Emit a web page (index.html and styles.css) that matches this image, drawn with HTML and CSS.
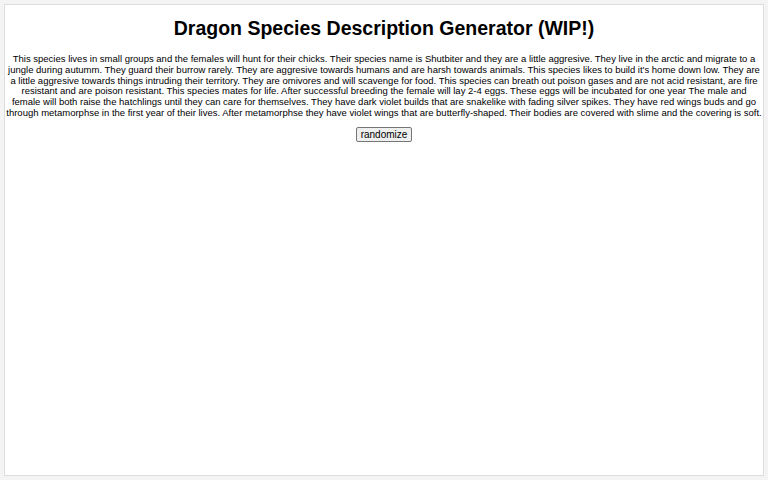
FILE: index.html
```html
<!DOCTYPE html>
<html lang="en">
<head>
    <meta charset="UTF-8">
    <meta name="viewport" content="width=device-width, initial-scale=1.0">
    <title>Dragon Species Description Generator</title>
    <link rel="stylesheet" href="styles.css">
</head>
<body>
    <div class="page">
        <h1>Dragon Species Description Generator (WIP!)</h1>
        <p id="description" class="description">This species lives in small groups and the females will hunt for their chicks. Their species name is Shutbiter and they are a little aggresive. They live in the arctic and migrate to a jungle during autumm. They guard their burrow rarely. They are aggresive towards humans and are harsh towards animals. This species likes to build it's home down low. They are a little aggresive towards things intruding their territory. They are omivores and will scavenge for food. This species can breath out poison gases and are not acid resistant, are fire resistant and are poison resistant. This species mates for life. After successful breeding the female will lay 2-4 eggs. These eggs will be incubated for one year The male and female will both raise the hatchlings until they can care for themselves. They have dark violet builds that are snakelike with fading silver spikes. They have red wings buds and go through metamorphse in the first year of their lives. After metamorphse they have violet wings that are butterfly-shaped. Their bodies are covered with slime and the covering is soft.</p>
        <div class="controls">
            <button type="button" id="randomize">randomize</button>
        </div>
    </div>
</body>
</html>
```

FILE: styles.css
```css
html,
body {
    height: 100%;
}

body {
    font-family: "Liberation Sans", Arial, sans-serif;
    background-color: #f4f4f4;
    margin: 0;
    padding: 4px;
    box-sizing: border-box;
}

.page {
    background-color: #fff;
    border: 1px solid #ddd;
    height: 100%;
    box-sizing: border-box;
    padding: 0 1px;
}

h1 {
    text-align: center;
    font-size: 19.5px;
    margin: 12px 0 14px;
}

.description {
    text-align: center;
    font-size: 9.5px;
    line-height: 10.8px;
    margin: 0 0 5px;
}

.controls {
    text-align: center;
}

button {
    font-family: "Liberation Sans", Arial, sans-serif;
    font-size: 10px;
    padding: 1px 4px;
    background: #efefef;
    border: 1px solid #767676;
    border-radius: 2px;
    color: #000;
}
```
